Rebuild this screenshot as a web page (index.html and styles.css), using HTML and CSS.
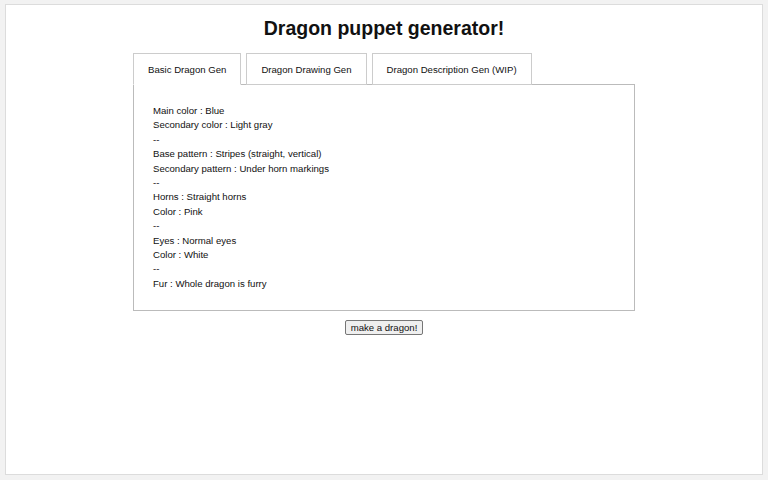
FILE: index.html
```html
<!DOCTYPE html>
<html lang="en">
<head>
    <meta charset="UTF-8">
    <meta name="viewport" content="width=device-width, initial-scale=1.0">
    <title>Dragon puppet generator!</title>
    <link rel="stylesheet" href="styles.css">
</head>
<body>
    <div class="page">
        <h1>Dragon puppet generator!</h1>

        <div class="generator">
            <!-- Tabs -->
            <div class="tabs">
                <button class="tab active">Basic Dragon Gen</button>
                <button class="tab">Dragon Drawing Gen</button>
                <button class="tab">Dragon Description Gen (WIP)</button>
            </div>

            <!-- Result -->
            <div class="tab-content" id="result">
                <div>Main color : Blue</div>
                <div>Secondary color : Light gray</div>
                <div>--</div>
                <div>Base pattern : Stripes (straight, vertical)</div>
                <div>Secondary pattern : Under horn markings</div>
                <div>--</div>
                <div>Horns : Straight horns</div>
                <div>Color : Pink</div>
                <div>--</div>
                <div>Eyes : Normal eyes</div>
                <div>Color : White</div>
                <div>--</div>
                <div>Fur : Whole dragon is furry</div>
            </div>
        </div>

        <div class="actions">
            <button class="make-btn">make a dragon!</button>
        </div>
    </div>
</body>
</html>
```

FILE: styles.css
```css
body {
    font-family: "Liberation Sans", Arial, sans-serif;
    margin: 0;
    padding: 4px 5px 5px 5px;
    background-color: #f2f2f2;
    color: #111;
}
.page {
    background-color: #fff;
    border: 1px solid #dcdcdc;
    height: 471px;
    box-sizing: border-box;
    padding-top: 12px;
}
h1 {
    font-size: 19.5px;
    text-align: center;
    margin: 0 0 13px 0;
    line-height: 23px;
}
.generator {
    width: 502px;
    margin: 0 auto;
}
.tabs {
    display: flex;
    gap: 5px;
    position: relative;
    z-index: 1;
}
.tab {
    font-family: inherit;
    font-size: 9.6px;
    color: #111;
    background-color: #fff;
    border: 1px solid #ccc;
    height: 32px;
    padding: 0 14px;
    cursor: pointer;
}
.tab.active {
    border-bottom-color: #fff;
}
.tab-content {
    border: 1px solid #bbb;
    margin-top: -1px;
    padding: 19px 19px 19px 19px;
    font-size: 9.6px;
    line-height: 14.4px;
}
.actions {
    text-align: center;
    margin-top: 6px;
}
.make-btn {
    font-family: inherit;
    font-size: 9.6px;
    color: #111;
    background-color: #efefef;
    border: 1px solid #767676;
    border-radius: 2px;
    padding: 1px 5px;
    cursor: pointer;
}
```
